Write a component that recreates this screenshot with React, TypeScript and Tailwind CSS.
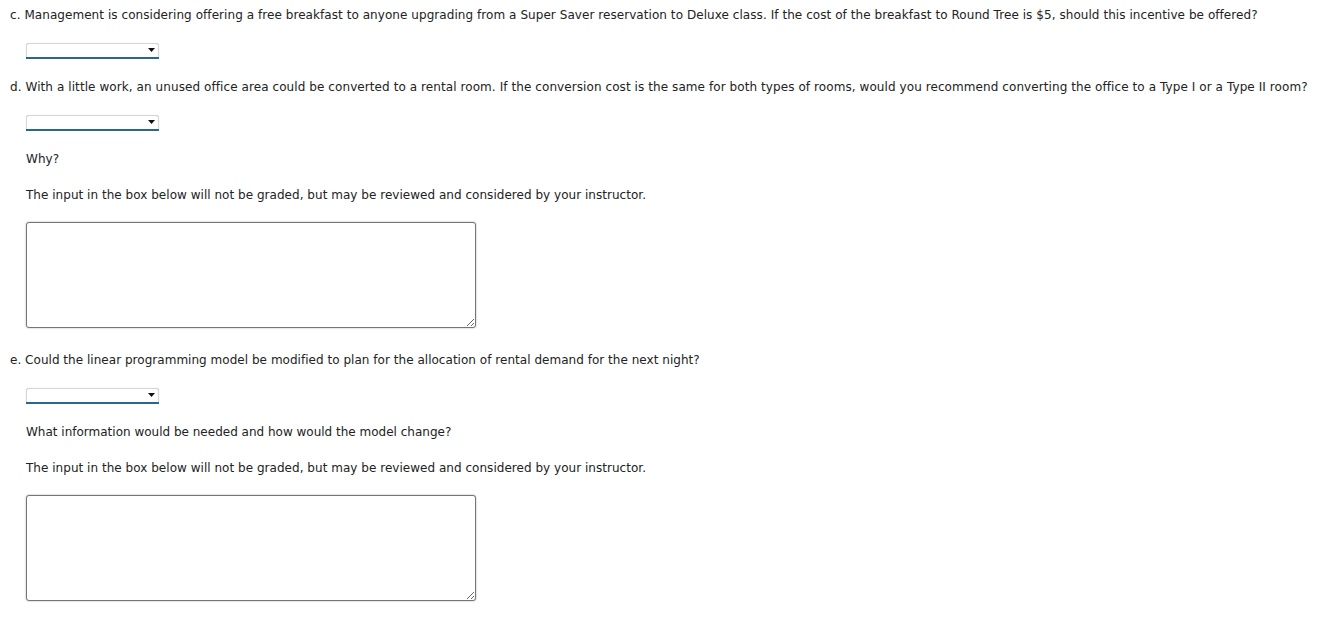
import React from "react";

function Dropdown() {
  return (
    <div className="relative w-[133px] h-[15px] bg-white rounded-t-[3px] border border-b-0 border-[#d6d6d6] shadow-[0_0_1px_rgba(0,0,0,0.2)]">
      <div className="absolute left-[-1px] right-[-1px] bottom-[-1px] h-[2px] bg-[#2b6590]" />
      <svg className="absolute right-[3px] top-[4px]" width="7" height="4" viewBox="0 0 7 4">
        <path d="M0 0h7L3.5 4z" fill="#111" />
      </svg>
    </div>
  );
}

function Answer() {
  return (
    <textarea
      className="block w-[450px] h-[106px] border border-[#767676] rounded-[3px] shadow-[0_0_2px_rgba(0,0,0,0.35)] bg-white outline-none"
      style={{ resize: "both" }}
    />
  );
}

export default function App() {
  return (
    <div className="min-h-screen bg-white text-[#222] text-[12px] tracking-[0.03px] leading-[15px] font-['Verdana','DejaVu_Sans',sans-serif] pl-[10px]">
      {/* part c */}
      <p className="pt-[8px] tracking-[0.06px]">
        c. Management is considering offering a free breakfast to anyone upgrading from a Super Saver reservation to Deluxe class. If the cost of the breakfast to Round Tree is $5, should this incentive be offered?
      </p>
      <div className="pl-[16px] pt-[20px]">
        <Dropdown />
      </div>

      {/* part d */}
      <p className="pt-[22px] tracking-[0.08px]">
        d. With a little work, an unused office area could be converted to a rental room. If the conversion cost is the same for both types of rooms, would you recommend converting the office to a Type I or a Type II room?
      </p>
      <div className="pl-[16px]">
        <div className="pt-[20px]">
          <Dropdown />
        </div>
        <p className="pt-[22px]">Why?</p>
        <p className="pt-[21px]">The input in the box below will not be graded, but may be reviewed and considered by your instructor.</p>
        <div className="pt-[19px]">
          <Answer />
        </div>
      </div>

      {/* part e */}
      <p className="pt-[25px]">e. Could the linear programming model be modified to plan for the allocation of rental demand for the next night?</p>
      <div className="pl-[16px]">
        <div className="pt-[20px]">
          <Dropdown />
        </div>
        <p className="pt-[22px] tracking-normal">What information would be needed and how would the model change?</p>
        <p className="pt-[21px]">The input in the box below will not be graded, but may be reviewed and considered by your instructor.</p>
        <div className="pt-[19px]">
          <Answer />
        </div>
      </div>
    </div>
  );
}
